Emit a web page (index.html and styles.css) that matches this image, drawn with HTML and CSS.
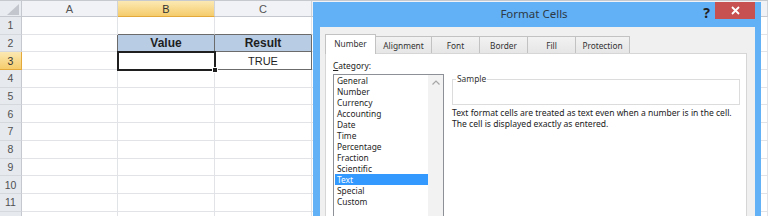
FILE: index.html
```html
<!DOCTYPE html>
<html lang="en-us">
  <head>
    <meta charset="utf-8">
    <title>Format Cells</title>
    <link rel="stylesheet" href="styles.css">
  </head>
  <body>
    <div class="sheet">
      <div class="corner">
        <svg width="12" height="11" viewBox="0 0 12 11"><polygon points="12,0 12,11 0,11" fill="#c3c7cd"/></svg>
      </div>
      <div class="colhead">A</div>
      <div class="colhead selcol">B</div>
      <div class="colhead">C</div>
      <div class="colhead"></div>

      <div class="rowhead">1</div>
      <div class="cell"></div>
      <div class="cell abovetable"></div>
      <div class="cell abovetable"></div>
      <div class="cell"></div>

      <div class="rowhead">2</div>
      <div class="cell lefttable"></div>
      <div class="cell th">Value</div>
      <div class="cell th">Result</div>
      <div class="cell"></div>

      <div class="rowhead selrow">3</div>
      <div class="cell lefttable"></div>
      <div class="cell td selcell"></div>
      <div class="cell td">TRUE</div>
      <div class="cell"></div>

      <div class="rowhead">4</div><div class="cell"></div><div class="cell"></div><div class="cell"></div><div class="cell"></div>
      <div class="rowhead">5</div><div class="cell"></div><div class="cell"></div><div class="cell"></div><div class="cell"></div>
      <div class="rowhead">6</div><div class="cell"></div><div class="cell"></div><div class="cell"></div><div class="cell"></div>
      <div class="rowhead">7</div><div class="cell"></div><div class="cell"></div><div class="cell"></div><div class="cell"></div>
      <div class="rowhead">8</div><div class="cell"></div><div class="cell"></div><div class="cell"></div><div class="cell"></div>
      <div class="rowhead">9</div><div class="cell"></div><div class="cell"></div><div class="cell"></div><div class="cell"></div>
      <div class="rowhead">10</div><div class="cell"></div><div class="cell"></div><div class="cell"></div><div class="cell"></div>
      <div class="rowhead">11</div><div class="cell"></div><div class="cell"></div><div class="cell"></div><div class="cell"></div>
      <div class="rowhead"></div><div class="cell"></div><div class="cell"></div><div class="cell"></div><div class="cell"></div>
    </div>

    <div class="dialog">
      <div class="titlebar">
        <span></span>
        <span class="title">Format Cells</span>
        <div class="titlebtns">
          <span class="help">?</span>
          <span class="close">
            <svg width="9" height="9" viewBox="0 0 9 9"><path d="M1 1 L8 8 M8 1 L1 8" stroke="#fff" stroke-width="1.8"/></svg>
          </span>
        </div>
      </div>

      <div class="dlgbody">
        <div class="tabs">
          <div class="tab current">Number</div>
          <div class="tab w56">Alignment</div>
          <div class="tab">Font</div>
          <div class="tab">Border</div>
          <div class="tab">Fill</div>
          <div class="tab w54">Protection</div>
        </div>

        <div class="panel">
          <div class="catcol">
            <div class="label"><u>C</u>ategory:</div>
            <div class="listbox">
              <ul class="items">
                <li>General</li>
                <li>Number</li>
                <li>Currency</li>
                <li>Accounting</li>
                <li>Date</li>
                <li>Time</li>
                <li>Percentage</li>
                <li>Fraction</li>
                <li>Scientific</li>
                <li class="selected">Text</li>
                <li>Special</li>
                <li>Custom</li>
              </ul>
              <div class="scrollbar">
                <svg width="8" height="5" viewBox="0 0 8 5"><path d="M0.5 4.5 L4 1 L7.5 4.5" fill="none" stroke="#a6a6a6" stroke-width="1.2"/></svg>
              </div>
            </div>
          </div>

          <div class="infocol">
            <fieldset class="sample">
              <legend>Sample</legend>
            </fieldset>
            <p class="desc">Text format cells are treated as text even when a number is in the cell.<br>
              The cell is displayed exactly as entered.</p>
          </div>
        </div>
      </div>
    </div>
  </body>
</html>
```

FILE: styles.css
```css
  html {
    font-family: "Liberation Sans", Arial, sans-serif;
  }

  body {
    margin: 0;
    width: 768px;
    height: 216px;
    overflow: hidden;
    position: relative;
    background-color: #fff;
  }

  /* spreadsheet behind the dialog */

  .sheet {
    display: grid;
    grid-template-columns: 22px 96px 97px 97px 1fr;
    grid-template-rows: 16px repeat(12, 17.7px);
    border-top: 1px solid #c6c9ce;
    font-size: 11px;
  }

  .corner {
    display: flex;
    align-items: flex-end;
    justify-content: flex-end;
    padding: 0 2px 1px 0;
    background-color: #e9ecf0;
    border-right: 1px solid #c5c9cf;
    border-bottom: 1px solid #c5c9cf;
  }

  .colhead {
    display: flex;
    align-items: center;
    justify-content: center;
    color: #555;
    background-color: #f0f2f5;
    border-right: 1px solid #d0d4d9;
    border-bottom: 1px solid #c5c9cf;
  }

  .rowhead {
    display: flex;
    align-items: center;
    justify-content: center;
    color: #505050;
    font-size: 10.5px;
    background-color: #e6e9ee;
    border-right: 1px solid #c5c9cf;
    border-bottom: 1px solid #d5d9de;
  }

  .selcol, .selrow {
    color: #333;
    background-image: linear-gradient(#fbe9b3, #f5cc6c);
    border-bottom-color: #e3a93a;
  }

  .selrow {
    border-right-color: #e3a93a;
  }

  .cell {
    border-right: 1px solid #e1e3e6;
    border-bottom: 1px solid #e1e3e6;
  }

  .abovetable {
    border-bottom-color: #6b6b6b;
  }

  .lefttable {
    border-right-color: #6b6b6b;
  }

  .th, .td {
    display: flex;
    align-items: center;
    justify-content: center;
    color: #1e1e1e;
    font-size: 11px;
    border-right-color: #6b6b6b;
    border-bottom-color: #6b6b6b;
  }

  .th {
    font-size: 12px;
    font-weight: bold;
    background-color: #b8cce4;
  }

  .selcell {
    position: relative;
    outline: 2px solid #1f1f1f;
    outline-offset: -1px;
  }

  .selcell::after {
    content: "";
    position: absolute;
    right: -4px;
    bottom: -4px;
    width: 4px;
    height: 4px;
    background-color: #1f1f1f;
    border: 1px solid #fff;
  }

  /* Format Cells dialog */

  .dialog {
    position: absolute;
    left: 313px;
    top: 2px;
    width: 448px;
    height: 240px;
    background-color: #62b0f5;
    font-family: "Noto Sans", "Open Sans", sans-serif;
    color: #1e1e1e;
    display: flex;
    flex-direction: column;
  }

  .titlebar {
    height: 25px;
    display: grid;
    grid-template-columns: 1fr auto 1fr;
    padding-right: 6px;
  }

  .title {
    font-size: 11.5px;
    color: #2d3a45;
    line-height: 24px;
  }

  .titlebtns {
    display: flex;
    justify-content: flex-end;
    align-items: flex-start;
  }

  .help {
    font-size: 14px;
    font-weight: bold;
    color: #222;
    line-height: 22px;
    margin-right: 5px;
  }

  .close {
    width: 40px;
    height: 17px;
    background-color: #c75050;
    display: flex;
    align-items: center;
    justify-content: center;
  }

  .dlgbody {
    flex: 1;
    margin: 0 6px 0 7px;
    padding: 6px 8px 0 5px;
    background-color: #f0f0f0;
    display: flex;
    flex-direction: column;
  }

  .tabs {
    display: flex;
    align-items: flex-end;
    height: 20px;
    font-size: 8.3px;
  }

  .tab {
    width: 49px;
    height: 17px;
    margin-right: -1px;
    display: flex;
    align-items: center;
    justify-content: center;
    color: #333;
    background-image: linear-gradient(#f2f2f2, #e6e6e6);
    border: 1px solid #c2c2c2;
    border-bottom: none;
    box-sizing: border-box;
  }

  .tab.current {
    width: 51px;
    height: 20px;
    background: #fff;
    position: relative;
    z-index: 1;
    margin-bottom: -1px;
    padding-bottom: 2px;
  }

  .w56 {
    width: 57px;
  }

  .w54 {
    width: 55px;
  }

  .panel {
    flex: 1;
    background-color: #fff;
    border: 1px solid #d6d6d6;
    padding: 6px 6px 0 7px;
    display: flex;
    gap: 8px;
    font-size: 8.4px;
  }

  .catcol {
    width: 111px;
  }

  .label {
    line-height: 12px;
    margin-bottom: 2px;
    color: #222;
  }

  .listbox {
    height: 150px;
    border: 1px solid #8d9097;
    display: flex;
  }

  .items {
    list-style: none;
    margin: 0;
    padding: 0 0 0 1px;
    flex: 1;
  }

  .items li {
    line-height: 11px;
    height: 11px;
    padding-left: 2px;
  }

  .items li.selected {
    background-color: #3399ff;
    color: #fff;
  }

  .scrollbar {
    width: 15px;
    background-color: #f2f2f2;
    display: flex;
    justify-content: center;
    padding-top: 5px;
    box-sizing: border-box;
  }

  .infocol {
    width: 288px;
    padding-top: 14px;
  }

  .sample {
    height: 31px;
    margin: 0;
    padding: 0;
    border: 1px solid #dcdcdc;
    box-sizing: border-box;
  }

  .sample legend {
    margin-left: 3px;
    padding: 0 1px;
    line-height: 10px;
    color: #333;
  }

  .desc {
    margin: 3px 0 0;
    font-size: 8.55px;
    line-height: 11px;
    color: #222;
    white-space: nowrap;
  }
```
